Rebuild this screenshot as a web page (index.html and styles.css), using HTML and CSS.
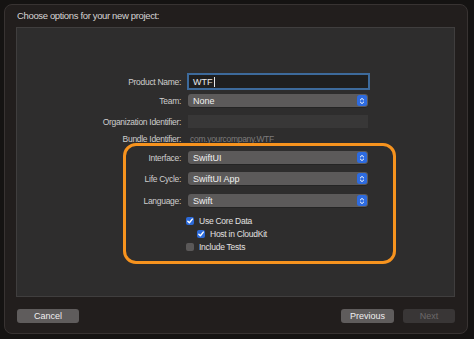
FILE: index.html
```html
<!DOCTYPE html>
<html>
<head>
<meta charset="utf-8">
<link rel="stylesheet" href="styles.css">
</head>
<body>
<div class="window">
  <div class="title">Choose options for your new project:</div>
  <div class="panel">
    <div class="form">
      <div class="row r-name">
        <div class="label">Product Name:</div>
        <div class="field text focus">WTF<span class="caret"></span></div>
      </div>
      <div class="row r-team">
        <div class="label">Team:</div>
        <div class="field popup">None<span class="stepper"><svg viewBox="0 0 8 10" width="8" height="10"><path d="M2.3 4 L4 2.4 L5.7 4 M2.3 6 L4 7.6 L5.7 6" fill="none" stroke="#fff" stroke-width="1" stroke-linecap="round" stroke-linejoin="round"/></svg></span></div>
      </div>
      <div class="row r-org">
        <div class="label">Organization Identifier:</div>
        <div class="field text empty"></div>
      </div>
      <div class="row r-bundle">
        <div class="label">Bundle Identifier:</div>
        <div class="field plain">com.yourcompany.WTF</div>
      </div>
      <div class="row r-iface">
        <div class="label">Interface:</div>
        <div class="field popup">SwiftUI<span class="stepper"><svg viewBox="0 0 8 10" width="8" height="10"><path d="M2.3 4 L4 2.4 L5.7 4 M2.3 6 L4 7.6 L5.7 6" fill="none" stroke="#fff" stroke-width="1" stroke-linecap="round" stroke-linejoin="round"/></svg></span></div>
      </div>
      <div class="row r-life">
        <div class="label">Life Cycle:</div>
        <div class="field popup">SwiftUI App<span class="stepper"><svg viewBox="0 0 8 10" width="8" height="10"><path d="M2.3 4 L4 2.4 L5.7 4 M2.3 6 L4 7.6 L5.7 6" fill="none" stroke="#fff" stroke-width="1" stroke-linecap="round" stroke-linejoin="round"/></svg></span></div>
      </div>
      <div class="row r-lang">
        <div class="label">Language:</div>
        <div class="field popup">Swift<span class="stepper"><svg viewBox="0 0 8 10" width="8" height="10"><path d="M2.3 4 L4 2.4 L5.7 4 M2.3 6 L4 7.6 L5.7 6" fill="none" stroke="#fff" stroke-width="1" stroke-linecap="round" stroke-linejoin="round"/></svg></span></div>
      </div>
      <div class="row check r-core">
        <div class="label"></div>
        <div class="cb-wrap"><span class="cb on"><svg viewBox="0 0 8 8" width="8" height="8"><path d="M1.8 4.2 L3.4 5.8 L6.3 2.1" fill="none" stroke="#fff" stroke-width="1.4" stroke-linecap="round" stroke-linejoin="round"/></svg></span>Use Core Data</div>
      </div>
      <div class="row check r-cloud">
        <div class="label"></div>
        <div class="cb-wrap indent"><span class="cb on"><svg viewBox="0 0 8 8" width="8" height="8"><path d="M1.8 4.2 L3.4 5.8 L6.3 2.1" fill="none" stroke="#fff" stroke-width="1.4" stroke-linecap="round" stroke-linejoin="round"/></svg></span>Host in CloudKit</div>
      </div>
      <div class="row check r-tests">
        <div class="label"></div>
        <div class="cb-wrap"><span class="cb off"></span>Include Tests</div>
      </div>
    </div>
    <div class="highlight"></div>
  </div>
  <div class="buttons">
    <div class="btn cancel">Cancel</div>
    <div class="spacer"></div>
    <div class="btn prev">Previous</div>
    <div class="btn next disabled">Next</div>
  </div>
</div>
</body>
</html>
```

FILE: styles.css
```css
* { box-sizing: border-box; }
html, body { margin: 0; padding: 0; }
body {
  background: #151312;
  width: 474px;
  height: 339px;
  overflow: hidden;
  font-family: "Liberation Sans", "Inter", sans-serif;
  color: #dcdcdc;
}
.window {
  margin: 4px 0 0 4px;
  width: 464px;
  height: 330px;
  background: #221e1d;
  border: 1px solid #383332;
  border-radius: 8px;
  padding: 0 12px 0 11px;
  display: flex;
  flex-direction: column;
}
.title {
  font-size: 9.5px;
  line-height: 12px;
  margin-top: 5px;
  padding-left: 1px;
  letter-spacing: -0.35px;
  color: #d6d4d4;
}
.panel {
  position: relative;
  margin-top: 5px;
  height: 270px;
  background: #2e2d2d;
  border: 1px solid #403e3e;
}
.form {
  display: flex;
  flex-direction: column;
  padding-top: 46px;
}
.row {
  display: flex;
  align-items: center;
  height: 13px;
}
.label {
  width: 164px;
  text-align: right;
  font-size: 8.5px;
  letter-spacing: -0.3px;
  color: #cfcdcd;
}
.field {
  margin-left: 7px;
  width: 180px;
  height: 100%;
  font-size: 9px;
  display: flex;
  align-items: center;
  position: relative;
}
.r-name { height: 15px; }
.r-team { margin-top: 5px; }
.r-org { margin-top: 8px; }
.r-bundle { margin-top: 5px; height: 12px; }
.r-iface { margin-top: 6px; }
.r-life { margin-top: 8px; }
.r-lang { margin-top: 9px; }
.r-core { margin-top: 9px; height: 10px; }
.r-cloud { margin-top: 3px; height: 10px; }
.r-tests { margin-top: 3px; height: 10px; }

.text {
  background: #1f1f1f;
  padding-left: 4px;
  color: #ececec;
}
.focus {
  box-shadow: 0 0 0 2px #3d6a9b;
  width: 179px;
  margin-left: 8px;
  height: 13px;
}
.caret {
  display: inline-block;
  width: 1px;
  height: 10px;
  background: #e8e8e8;
  margin-left: 1px;
}
.empty {
  background: #383737;
}
.plain {
  color: #7d7b7b;
  font-size: 8.5px;
  letter-spacing: -0.3px;
  padding-left: 2px;
}
.popup {
  background: #5c5a5a;
  border-radius: 3px;
  padding-left: 5px;
  color: #f0f0f0;
  box-shadow: 0 0.5px 0 rgba(0,0,0,0.4);
}
.stepper {
  position: absolute;
  right: 1px;
  top: 1px;
  bottom: 1px;
  width: 10px;
  background: #2d6be0;
  border-radius: 2.5px;
  display: flex;
  align-items: center;
  justify-content: center;
}
.cb-wrap {
  margin-left: 5px;
  display: flex;
  align-items: center;
  font-size: 8.5px;
  letter-spacing: -0.25px;
  color: #e2e0e0;
}
.cb-wrap.indent { margin-left: 16px; }
.cb {
  width: 8px;
  height: 8px;
  border-radius: 2px;
  margin-right: 5px;
  display: flex;
  align-items: center;
  justify-content: center;
}
.cb.on { background: #2c6ad9; }
.cb.off { background: #5a5858; }
.highlight {
  position: absolute;
  left: 106px;
  top: 115px;
  width: 273px;
  height: 121px;
  border: 3.5px solid #f7931e;
  border-radius: 13px;
  pointer-events: none;
}
.buttons {
  display: flex;
  align-items: center;
  margin-top: 12px;
  padding-left: 1px;
}
.btn {
  height: 14px;
  border-radius: 3px;
  background: #5f5c5c;
  color: #f0f0f0;
  font-size: 9px;
  display: flex;
  align-items: center;
  justify-content: center;
}
.cancel { width: 62px; }
.spacer { flex: 1; }
.prev { width: 53px; }
.next { width: 52px; margin-left: 9px; }
.disabled {
  background: #393636;
  color: #6c6969;
}
```
